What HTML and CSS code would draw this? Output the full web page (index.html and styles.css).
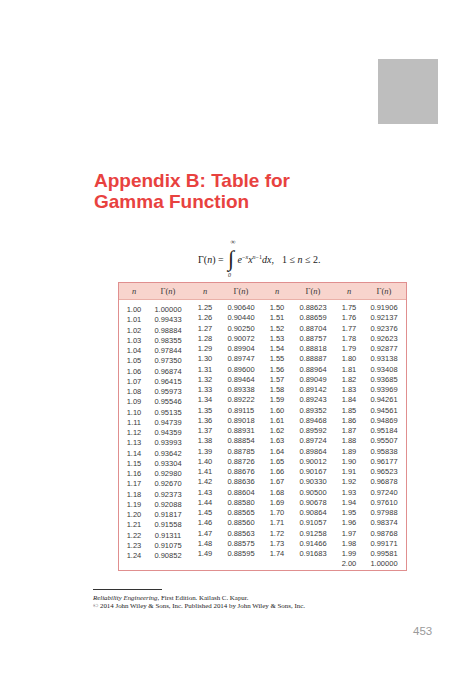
FILE: index.html
```html
<!DOCTYPE html>
<html>
<head>
<meta charset="utf-8">
<link rel="stylesheet" href="styles.css">
</head>
<body>
<div class="page">
  <div class="thumb"></div>
  <h1 class="title">Appendix B: Table for<br>Gamma Function</h1>
  <div class="formula">
    <span class="f-lhs">&Gamma;(<i>n</i>) =</span>
    <span class="int"><span class="lim-top">&infin;</span><span class="int-sign">&int;</span><span class="lim-bot">0</span></span>
    <span class="f-body"><i>e</i><sup>&minus;<i>x</i></sup><i>x</i><sup><i>n</i>&minus;1</sup><i>dx</i>,</span>
    <span class="f-cond">1 &le; <i>n</i> &le; 2.</span>
  </div>
  <div class="gtable">
    <div class="ghead">
      <span class="hn">n</span><span class="hg">&Gamma;(<i>n</i>)</span>
      <span class="hn">n</span><span class="hg">&Gamma;(<i>n</i>)</span>
      <span class="hn">n</span><span class="hg">&Gamma;(<i>n</i>)</span>
      <span class="hn">n</span><span class="hg">&Gamma;(<i>n</i>)</span>
    </div>
    <div class="gbody">
      <div class="col low">1.00<br>1.01<br>1.02<br>1.03<br>1.04<br>1.05<br>1.06<br>1.07<br>1.08<br>1.09<br>1.10<br>1.11<br>1.12<br>1.13<br>1.14<br>1.15<br>1.16<br>1.17<br>1.18<br>1.19<br>1.20<br>1.21<br>1.22<br>1.23<br>1.24</div>
      <div class="col low">1.00000<br>0.99433<br>0.98884<br>0.98355<br>0.97844<br>0.97350<br>0.96874<br>0.96415<br>0.95973<br>0.95546<br>0.95135<br>0.94739<br>0.94359<br>0.93993<br>0.93642<br>0.93304<br>0.92980<br>0.92670<br>0.92373<br>0.92088<br>0.91817<br>0.91558<br>0.91311<br>0.91075<br>0.90852</div>
      <div class="col">1.25<br>1.26<br>1.27<br>1.28<br>1.29<br>1.30<br>1.31<br>1.32<br>1.33<br>1.34<br>1.35<br>1.36<br>1.37<br>1.38<br>1.39<br>1.40<br>1.41<br>1.42<br>1.43<br>1.44<br>1.45<br>1.46<br>1.47<br>1.48<br>1.49</div>
      <div class="col">0.90640<br>0.90440<br>0.90250<br>0.90072<br>0.89904<br>0.89747<br>0.89600<br>0.89464<br>0.89338<br>0.89222<br>0.89115<br>0.89018<br>0.88931<br>0.88854<br>0.88785<br>0.88726<br>0.88676<br>0.88636<br>0.88604<br>0.88580<br>0.88565<br>0.88560<br>0.88563<br>0.88575<br>0.88595</div>
      <div class="col">1.50<br>1.51<br>1.52<br>1.53<br>1.54<br>1.55<br>1.56<br>1.57<br>1.58<br>1.59<br>1.60<br>1.61<br>1.62<br>1.63<br>1.64<br>1.65<br>1.66<br>1.67<br>1.68<br>1.69<br>1.70<br>1.71<br>1.72<br>1.73<br>1.74</div>
      <div class="col">0.88623<br>0.88659<br>0.88704<br>0.88757<br>0.88818<br>0.88887<br>0.88964<br>0.89049<br>0.89142<br>0.89243<br>0.89352<br>0.89468<br>0.89592<br>0.89724<br>0.89864<br>0.90012<br>0.90167<br>0.90330<br>0.90500<br>0.90678<br>0.90864<br>0.91057<br>0.91258<br>0.91466<br>0.91683</div>
      <div class="col">1.75<br>1.76<br>1.77<br>1.78<br>1.79<br>1.80<br>1.81<br>1.82<br>1.83<br>1.84<br>1.85<br>1.86<br>1.87<br>1.88<br>1.89<br>1.90<br>1.91<br>1.92<br>1.93<br>1.94<br>1.95<br>1.96<br>1.97<br>1.98<br>1.99<br>2.00</div>
      <div class="col">0.91906<br>0.92137<br>0.92376<br>0.92623<br>0.92877<br>0.93138<br>0.93408<br>0.93685<br>0.93969<br>0.94261<br>0.94561<br>0.94869<br>0.95184<br>0.95507<br>0.95838<br>0.96177<br>0.96523<br>0.96878<br>0.97240<br>0.97610<br>0.97988<br>0.98374<br>0.98768<br>0.99171<br>0.99581<br>1.00000</div>
    </div>
  </div>
  <div class="foot">
    <div class="foot-rule"></div>
    <p class="foot-line"><i>Reliability Engineering</i>, First Edition. Kailash C. Kapur.</p>
    <p class="foot-line">&copy; 2014 John Wiley &amp; Sons, Inc. Published 2014 by John Wiley &amp; Sons, Inc.</p>
  </div>
  <div class="pagenum">453</div>
</div>
</body>
</html>
```
FILE: styles.css
```css
html, body {
  margin: 0;
  padding: 0;
  background: #ffffff;
}
.page {
  width: 474px;
  height: 677px;
  display: flex;
  flex-direction: column;
  overflow: hidden;
}
.thumb {
  margin: 59px 0 0 378px;
  width: 60px;
  height: 65px;
  background: #bebebe;
}
.title {
  margin: 46px 0 0 94px;
  font-family: "Liberation Sans", Arial, sans-serif;
  font-weight: bold;
  font-size: 19px;
  line-height: 21px;
  color: #e8423f;
}
.formula {
  margin: 27px 0 0 198px;
  display: flex;
  align-items: center;
  font-family: "Liberation Serif", "DejaVu Serif", serif;
  font-size: 10px;
  color: #222;
  height: 40px;
}
.formula i { font-style: italic; }
.formula sup {
  font-size: 6px;
  line-height: 0;
  vertical-align: 4px;
}
.f-lhs { margin-right: 3px; }
.int {
  display: inline-flex;
  flex-direction: column;
  align-items: center;
  margin-right: 2px;
}
.lim-top {
  font-size: 7px;
  line-height: 7px;
  margin-left: 4px;
}
.int-sign {
  font-size: 22px;
  line-height: 26px;
  font-style: italic;
}
.lim-bot {
  font-size: 6px;
  line-height: 7px;
  font-style: italic;
  margin-right: 3px;
}
.f-body { margin-right: 8px; }
.gtable {
  margin: 3px 0 0 118px;
  width: 289px;
  height: 289px;
  box-sizing: border-box;
  border: 1px solid #e08f8f;
  color: #3a3a3a;
}
.ghead, .gbody {
  display: grid;
  grid-template-columns: 30px 38px 36px 36px 36px 36px 36px 34px;
}
.ghead {
  height: 16px;
  align-items: center;
  background: #f8d4cd;
  border-bottom: 1px solid #eab0a8;
  font-family: "Liberation Serif", "DejaVu Serif", serif;
  font-size: 8.5px;
}
.ghead span { text-align: center; }
.hn { font-style: italic; }
.gbody {
  padding-top: 3px;
  font-family: "Liberation Sans", Arial, sans-serif;
  font-size: 7.5px;
  line-height: 10.25px;
}
.col { text-align: center; }
.col.low { padding-top: 2px; }
.foot {
  margin: 18px 0 0 93px;
  font-family: "Liberation Serif", "Times New Roman", serif;
  font-size: 6.9px;
  line-height: 7.8px;
  color: #222;
}
.foot-rule {
  width: 69px;
  height: 0;
  border-top: 1px solid #333;
  margin-bottom: 4px;
}
.foot-line { margin: 0; white-space: nowrap; }
.pagenum {
  margin: 15px 0 0 413px;
  font-family: "Liberation Sans", Arial, sans-serif;
  font-size: 11.5px;
  line-height: 13px;
  color: #9a9a9a;
}
```
